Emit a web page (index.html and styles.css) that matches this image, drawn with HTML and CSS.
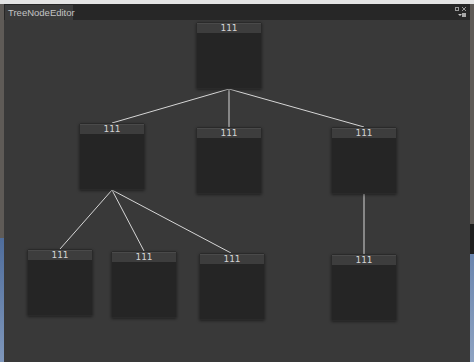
FILE: index.html
```html
<!DOCTYPE html>
<html lang="en">
<head>
    <meta charset="UTF-8">
    <title>TreeNodeEditor</title>
    <link rel="stylesheet" href="styles.css">
</head>
<body>
    <div class="topline"></div>
    <div class="frame">
        <div class="side side-left"><div class="blue"></div></div>
        <div class="window">
            <div class="tabbar">
                <div class="tab">TreeNodeEditor</div>
                <svg class="winbtns" width="16" height="14" viewBox="0 0 16 14">
                    <rect x="3.5" y="2.5" width="3" height="3" fill="none" stroke="#9a9a9a"/>
                    <path d="M10 2 L14 6 M14 2 L10 6" stroke="#9a9a9a" stroke-width="1"/>
                    <path d="M6 9 L10 9 L8 11 Z" fill="#c8c8c8"/>
                    <rect x="10" y="8" width="4" height="4" fill="#a8a8a8"/>
                </svg>
            </div>
            <div class="canvas">
                <svg class="links" width="466" height="342">
                    <g stroke="#d6d6d6" stroke-width="1">
                        <line x1="225" y1="69" x2="108" y2="103"/>
                        <line x1="225" y1="69" x2="225" y2="107"/>
                        <line x1="225" y1="69" x2="360" y2="107"/>
                        <line x1="108" y1="170" x2="56" y2="229"/>
                        <line x1="108" y1="170" x2="140" y2="231"/>
                        <line x1="108" y1="170" x2="227" y2="233"/>
                        <line x1="360" y1="174" x2="360" y2="234"/>
                    </g>
                </svg>
                <div class="node" style="left:192px;top:2px"><div class="head">111</div><div class="body"></div></div>
                <div class="node" style="left:75px;top:103px"><div class="head">111</div><div class="body"></div></div>
                <div class="node" style="left:192px;top:107px"><div class="head">111</div><div class="body"></div></div>
                <div class="node" style="left:327px;top:107px"><div class="head">111</div><div class="body"></div></div>
                <div class="node" style="left:23px;top:229px"><div class="head">111</div><div class="body"></div></div>
                <div class="node" style="left:107px;top:231px"><div class="head">111</div><div class="body"></div></div>
                <div class="node" style="left:195px;top:233px"><div class="head">111</div><div class="body"></div></div>
                <div class="node" style="left:327px;top:234px"><div class="head">111</div><div class="body"></div></div>
            </div>
        </div>
        <div class="side side-right"><div class="dark"></div><div class="blue"></div></div>
    </div>
</body>
</html>
```
FILE: styles.css
```css
* {
    margin: 0;
    padding: 0;
    box-sizing: border-box;
}
body {
    width: 474px;
    height: 362px;
    overflow: hidden;
    background: #393939;
    font-family: "DejaVu Sans", sans-serif;
}
.topline {
    height: 4px;
    background: #e4e4e4;
}
.frame {
    display: flex;
    height: 358px;
}
.side {
    width: 4px;
    background: #5f5b57;
    display: flex;
    flex-direction: column;
    justify-content: flex-end;
}
.side-left .blue {
    height: 124px;
    background: linear-gradient(#4f6d9c, #7f97bb);
}
.side-right .dark {
    height: 30px;
    background: #1f1f1f;
}
.side-right .blue {
    height: 108px;
    background: linear-gradient(#6a85ae, #8ea3c2);
}
.window {
    flex: 1;
    display: flex;
    flex-direction: column;
}
.tabbar {
    height: 16px;
    background: #272727;
    display: flex;
    justify-content: space-between;
    padding-left: 1px;
}
.tab {
    margin-top: 1px;
    width: 68px;
    height: 15px;
    background: #3b3b3b;
    color: #c4c4c4;
    font-family: "Liberation Sans", sans-serif;
    font-size: 9.5px;
    line-height: 15px;
    padding-left: 3px;
    white-space: nowrap;
}
.winbtns {
    margin-right: 2px;
    margin-top: 1px;
}
.canvas {
    flex: 1;
    position: relative;
    background: #393939;
}
.links {
    position: absolute;
    left: 0;
    top: 0;
}
.node {
    position: absolute;
    width: 66px;
    height: 67px;
    display: flex;
    flex-direction: column;
    border: 1px solid #2a2a2a;
    border-radius: 2px;
    box-shadow: 0 1px 3px rgba(0, 0, 0, 0.45);
}
.head {
    height: 10px;
    background: #3d3d3d;
    border-top: 1px solid #4a4a4a;
    color: #d4d4d4;
    font-size: 9px;
    line-height: 9px;
    text-align: center;
}
.body {
    flex: 1;
    background: #252525;
}
```
